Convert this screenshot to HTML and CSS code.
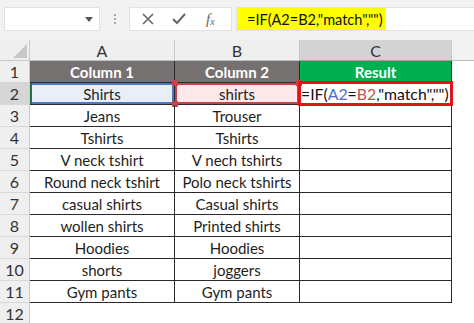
FILE: index.html
```html
<!DOCTYPE html>
<html>
<head>
<meta charset="utf-8">
<link rel="stylesheet" href="styles.css">
</head>
<body>
<div class="toolbar">
  <div class="namebox">
    <svg class="dd" width="8" height="5" viewBox="0 0 8 5"><path d="M0 0H8L4 5Z" fill="#555"/></svg>
  </div>
  <div class="dots"><span></span><span></span><span></span></div>
  <div class="fxbox">
    <svg class="ico" width="14" height="14" viewBox="0 0 14 14"><path d="M2 2L12 12M12 2L2 12" stroke="#666" stroke-width="1.6" fill="none"/></svg>
    <svg class="ico" width="16" height="14" viewBox="0 0 16 14"><path d="M2 7L6 11L14 2" stroke="#666" stroke-width="2" fill="none"/></svg>
    <span class="fx">f<sub>x</sub></span>
  </div>
  <div class="formula"><span class="hl">=IF(A2=B2,"match","")</span></div>
</div>
<div class="sheet">
  <div class="corner"><svg width="14" height="14" viewBox="0 0 14 14"><path d="M14 0V14H0Z" fill="#c8c8c8"/></svg></div>
  <div class="ch">A</div>
  <div class="ch">B</div>
  <div class="ch sel">C</div>
  <div class="ch end"></div>

  <div class="rh">1</div>
  <div class="c hd">Column 1</div>
  <div class="c hd">Column 2</div>
  <div class="c res">Result</div>
  <div class="e"></div>

  <div class="rh rsel">2</div>
  <div class="c a2">Shirts<span class="gb"></span></div>
  <div class="c b2">shirts<span class="sq tl"></span><span class="sq bl"></span><span class="sq tr"></span></div>
  <div class="c c2"><span class="f">=IF(<span class="blue">A2</span>=<span class="red">B2</span>,"match","")<span class="cur"></span></span></div>
  <div class="e"></div>

  <div class="rh">3</div><div class="c">Jeans</div><div class="c">Trouser</div><div class="c"></div><div class="e"></div>
  <div class="rh">4</div><div class="c">Tshirts</div><div class="c">Tshirts</div><div class="c"></div><div class="e"></div>
  <div class="rh">5</div><div class="c">V neck tshirt</div><div class="c">V nech tshirts</div><div class="c"></div><div class="e"></div>
  <div class="rh">6</div><div class="c">Round neck tshirt</div><div class="c">Polo neck tshirts</div><div class="c"></div><div class="e"></div>
  <div class="rh">7</div><div class="c">casual shirts</div><div class="c">Casual shirts</div><div class="c"></div><div class="e"></div>
  <div class="rh">8</div><div class="c">wollen shirts</div><div class="c">Printed shirts</div><div class="c"></div><div class="e"></div>
  <div class="rh">9</div><div class="c">Hoodies</div><div class="c">Hoodies</div><div class="c"></div><div class="e"></div>
  <div class="rh">10</div><div class="c">shorts</div><div class="c">joggers</div><div class="c"></div><div class="e"></div>
  <div class="rh">11</div><div class="c">Gym pants</div><div class="c">Gym pants</div><div class="c"></div><div class="e"></div>
  <div class="rh">12</div><div class="blank"></div><div class="blank"></div><div class="blank"></div><div class="e"></div>
</div>
</body>
</html>
```
FILE: styles.css
```css
* { box-sizing: border-box; }
html, body { margin: 0; padding: 0; }
body {
  width: 474px;
  height: 323px;
  overflow: hidden;
  background: #fff;
  font-family: Lato, "Open Sans", sans-serif;
  color: #1e1e1e;
}
.toolbar {
  height: 40px;
  background: #f2f2f2;
  display: flex;
  align-items: flex-start;
  padding-top: 7px;
  padding-left: 4px;
}
.namebox {
  width: 96px;
  height: 24px;
  background: #fff;
  border: 1px solid #e2e2e2;
  display: flex;
  align-items: center;
  justify-content: flex-end;
  padding-right: 6px;
}
.dots {
  width: 29px;
  height: 24px;
  display: flex;
  flex-direction: column;
  align-items: center;
  justify-content: center;
  gap: 2px;
}
.dots span { width: 2px; height: 2px; background: #a8a8a8; display: block; }
.fxbox {
  width: 103px;
  height: 24px;
  background: #fff;
  border: 1px solid #e2e2e2;
  display: flex;
  align-items: center;
  padding-left: 11px;
  gap: 16px;
}
.fx {
  font-family: "Liberation Serif", serif;
  font-style: italic;
  font-size: 15px;
  color: #666;
  margin-left: 3px;
  line-height: 1;
}
.fx sub { font-size: 10px; vertical-align: -1px; }
.formula {
  flex: 1;
  height: 24px;
  margin-left: 4px;
  background: #fff;
  border: 1px solid #e2e2e2;
  border-right: none;
}
.hl {
  display: inline-flex;
  align-items: center;
  height: 22px;
  width: 149px;
  background: #ffff00;
  padding-left: 10px;
  font-size: 14.5px;
  color: #111;
}
.sheet {
  display: grid;
  grid-template-columns: 30px 145px 125px 152px 22px;
  grid-template-rows: 21px repeat(12, 22px);
  font-size: 15px;
}
.corner {
  background: #efefef;
  border-right: 1px solid #c9c9c9;
  border-bottom: 1px solid #c9c9c9;
  display: flex;
  align-items: flex-end;
  justify-content: flex-end;
  padding: 0 2px 2px 0;
}
.ch {
  background: #efefef;
  border-right: 1px solid #c9c9c9;
  border-bottom: 1px solid #bdbdbd;
  display: flex;
  align-items: center;
  justify-content: center;
  color: #333;
  font-size: 16px;
}
.ch.sel { background: #d3d3d3; border-bottom: 1px solid #9e9e9e; }
.ch.end { border-right: none; background: #f2f2f2; }
.rh {
  background: #efefef;
  border-right: 1px solid #c9c9c9;
  border-bottom: 1px solid #d8d8d8;
  display: flex;
  align-items: center;
  justify-content: center;
  color: #333;
  font-size: 16px;
}
.rh.rsel { background: #d6d6d6; }
.c {
  position: relative;
  border-right: 1px solid #2a2a2a;
  border-bottom: 1px solid #2a2a2a;
  display: flex;
  align-items: center;
  justify-content: center;
  white-space: nowrap;
}
.c.hd {
  background: #767171;
  color: #fff;
  font-weight: bold;
}
.c.res {
  background: #00b050;
  color: #fff;
  font-weight: bold;
}
.a2 {
  background: #e8eff9;
  box-shadow: inset 0 0 0 2px #4a78c2;
}
.gb {
  position: absolute;
  left: 0;
  top: 0;
  bottom: 0;
  width: 2px;
  background: #217346;
}
.b2 {
  background: #fce8e8;
  box-shadow: inset 0 0 0 2px #c8414d;
}
.sq {
  position: absolute;
  width: 6px;
  height: 6px;
  background: #c8414d;
}
.sq.tl { left: -3px; top: -3px; }
.sq.bl { left: -3px; bottom: -3px; }
.sq.tr { right: -3px; top: -3px; }
.c2 {
  justify-content: flex-start;
  overflow: visible;
  z-index: 2;
}
.c2::after {
  content: "";
  position: absolute;
  left: -2px;
  top: -2px;
  right: -2px;
  bottom: -2px;
  border: 3px solid #e3121b;
}
.f {
  position: relative;
  display: flex;
  align-items: center;
  padding-left: 1px;
  font-size: 15.8px;
  color: #111;
}
.blue { color: #4472c4; }
.red { color: #c0504d; }
.cur {
  display: inline-block;
  width: 1px;
  height: 16px;
  background: #000;
  margin-left: 1px;
}
.e, .blank { background: #fff; }
```
